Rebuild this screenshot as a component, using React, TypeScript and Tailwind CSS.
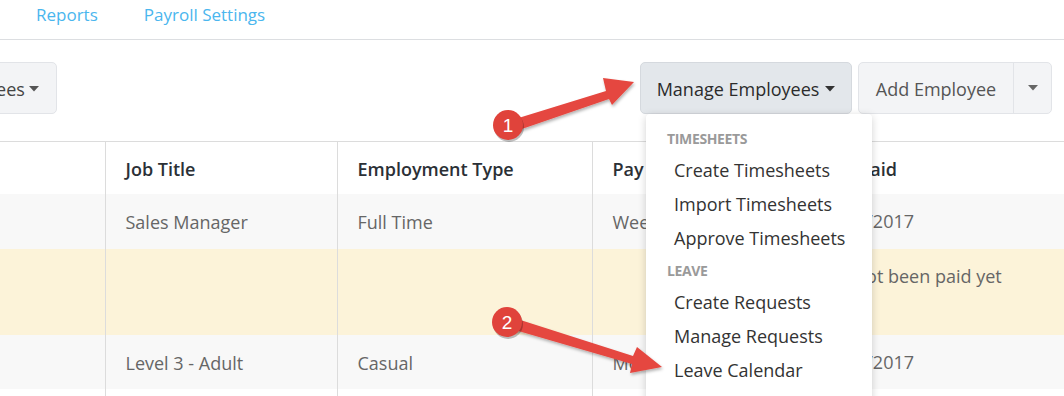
import React from 'react';

const font = { fontFamily: '"Open Sans", "Liberation Sans", sans-serif' };

const rows = [
  { title: 'Sales Manager', type: 'Full Time', pay: 'Weekly', paid: '12/05/2017', bg: 'bg-[#f8f8f8]', h: 'h-[55px]' },
  { title: '', type: '', pay: '', paid: 'Has not been paid yet', bg: 'bg-[#fcf3d9]', h: 'h-[86px]' },
  { title: 'Level 3 - Adult', type: 'Casual', pay: 'Monthly', paid: '30/04/2017', bg: 'bg-[#f8f8f8]', h: 'h-[54px]' },
];

const Caret = ({ className = '' }: { className?: string }) => (
  <svg width="10" height="6" viewBox="0 0 10 6" className={className}>
    <path d="M0 0 L10 0 L5 5.5 Z" fill="currentColor" />
  </svg>
);

const Badge = ({ n, cx, cy }: { n: string; cx: number; cy: number }) => (
  <g>
    <circle cx={cx + 1} cy={cy + 2} r="15" fill="rgba(0,0,0,0.25)" />
    <circle cx={cx} cy={cy} r="15" fill="#e0433b" />
    <text x={cx} y={cy + 6.5} textAnchor="middle" fontSize="19" fill="#fff" fontFamily='"Liberation Sans", sans-serif'>
      {n}
    </text>
  </g>
);

const Annotations = () => (
  <svg className="absolute inset-0 pointer-events-none" width="1064" height="396" viewBox="0 0 1064 396">
    <defs>
      <filter id="sh" x="-20%" y="-20%" width="140%" height="140%">
        <feDropShadow dx="1" dy="2" stdDeviation="1.5" floodColor="#000" floodOpacity="0.3" />
      </filter>
    </defs>
    <g filter="url(#sh)" fill="#e5473f">
      <polygon points="512,120 606,91 603,78 634,82 612,105 609,99 516,131" />
      <polygon points="511,317 633,356 637,347 662,367 630,373 632,364 508,328" />
    </g>
    <Badge n="1" cx={508} cy={125} />
    <Badge n="2" cx={507} cy={322} />
  </svg>
);

const menu: { head?: string; label?: string }[] = [
  { head: 'TIMESHEETS' },
  { label: 'Create Timesheets' },
  { label: 'Import Timesheets' },
  { label: 'Approve Timesheets' },
  { head: 'LEAVE' },
  { label: 'Create Requests' },
  { label: 'Manage Requests' },
  { label: 'Leave Calendar' },
  { label: 'Leave Balances' },
];

export default function App() {
  return (
    <div className="relative w-[1064px] h-[396px] overflow-hidden bg-white" style={font}>
      <nav className="flex gap-[46px] pl-[36px] pt-[2px] h-[40px] border-b border-[#dcdee1] text-[17px] text-[#4ab6ee]">
        <span>Reports</span>
        <span>Payroll Settings</span>
      </nav>

      <div className="flex items-start justify-between h-[101px] pt-[22px] pr-[12px]">
        <button className="-ml-[83px] h-[52px] pl-[16px] pr-[17px] pt-[2px] flex items-center gap-[4px] rounded-[5px] border border-[#e2e4e8] bg-[#f3f4f6] text-[18px] text-[#444]">
          Employees <Caret className="text-[#555]" />
        </button>
        <div className="relative flex gap-[6px]">
          <button className="h-[52px] w-[212px] pt-[2px] flex items-center justify-center gap-[6px] rounded-[5px] border border-[#d5d9de] bg-[#e3e7eb] text-[18px] text-[#2b2b2b]">
            Manage Employees <Caret className="text-[#333]" />
          </button>
          <div className="h-[52px] w-[194px] flex rounded-[5px] border border-[#e2e4e8] bg-[#f3f4f6] text-[18px] text-[#555]">
            <span className="flex-1 pt-[2px] flex items-center justify-center border-r border-[#e2e4e8]">Add Employee</span>
            <span className="w-[37px] flex items-center justify-center">
              <Caret className="text-[#666]" />
            </span>
          </div>
        </div>
      </div>

      <table className="table-fixed border-collapse border-t border-[#dcdcdc] -ml-[120px] w-[1184px]">
        <colgroup>
          <col className="w-[225px]" />
          <col className="w-[232px]" />
          <col className="w-[255px]" />
          <col className="w-[206px]" />
          <col />
        </colgroup>
        <thead>
          <tr className="h-[52px] text-left text-[18px] text-[#2b3036]">
            <th className="px-[20px] pt-[3px] font-semibold border-r border-[#dcdcdc]">Name</th>
            <th className="px-[20px] pt-[3px] font-semibold border-r border-[#dcdcdc]">Job Title</th>
            <th className="px-[20px] pt-[3px] font-semibold border-r border-[#dcdcdc]">Employment Type</th>
            <th className="px-[20px] pt-[3px] font-semibold border-r border-[#dcdcdc] whitespace-nowrap">Pay Schedule</th>
            <th className="px-[20px] pt-[3px] font-semibold">Last Paid</th>
          </tr>
        </thead>
        <tbody className="text-[18px] text-[#666]">
          {rows.map((r, i) => (
            <tr key={i} className={`${r.bg} ${r.h}`}>
              <td className="px-[20px] align-top pt-[15px] border-r border-[#dcdcdc]"></td>
              <td className="px-[20px] align-top pt-[15px] border-r border-[#dcdcdc]">{r.title}</td>
              <td className="px-[20px] align-top pt-[15px] border-r border-[#dcdcdc]">{r.type}</td>
              <td className="px-[20px] align-top pt-[15px] border-r border-[#dcdcdc]">{r.pay}</td>
              <td className="px-[20px] align-top pt-[14px] whitespace-nowrap">{r.paid}</td>
            </tr>
          ))}
          <tr className="h-[40px]">
            <td className="border-r border-[#dcdcdc]"></td>
            <td className="border-r border-[#dcdcdc]"></td>
            <td className="border-r border-[#dcdcdc]"></td>
            <td className="border-r border-[#dcdcdc]"></td>
            <td></td>
          </tr>
        </tbody>
      </table>

      <div className="absolute left-[646px] top-[114px] w-[226px] bg-white rounded-[4px] shadow-[0_2px_8px_rgba(0,0,0,0.18)] pt-[9px] pb-[8px]">
        {menu.map((m, i) =>
          m.head ? (
            <div key={i} className="pl-[21px] h-[30px] flex items-center text-[14px] font-bold text-[#9a9a9a] tracking-tight">
              {m.head}
            </div>
          ) : (
            <div key={i} className="pl-[28px] h-[34px] flex items-center text-[18px] text-[#333]">
              {m.label}
            </div>
          )
        )}
      </div>

      <Annotations />
    </div>
  );
}
